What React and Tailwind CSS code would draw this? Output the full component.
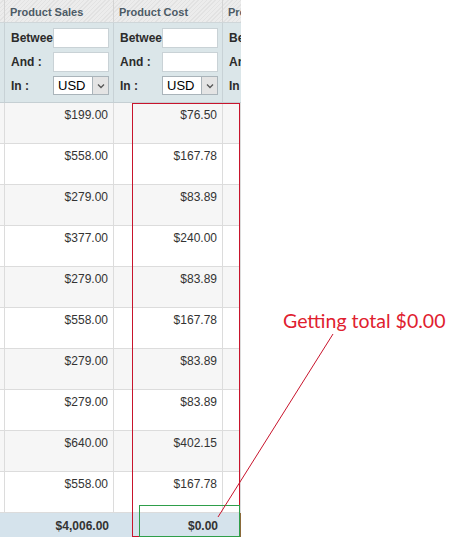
import React from "react";

const rows = [
  ["$199.00", "$76.50"],
  ["$558.00", "$167.78"],
  ["$279.00", "$83.89"],
  ["$377.00", "$240.00"],
  ["$279.00", "$83.89"],
  ["$558.00", "$167.78"],
  ["$279.00", "$83.89"],
  ["$279.00", "$83.89"],
  ["$640.00", "$402.15"],
  ["$558.00", "$167.78"],
];

const grid = "grid grid-cols-[5px_109px_109px_18px]";
const font = { fontFamily: '"Liberation Sans", Arial, sans-serif' };

function Filter({ cut }) {
  return (
    <div className="flex flex-col gap-[4px] pl-[6px] pt-[5px] text-[12px] font-bold text-[#2b2b2b]">
      <div className="flex h-[20px] items-center">
        <span className="w-[42px] overflow-hidden whitespace-nowrap">Betwee</span>
        {!cut && <div className="h-[20px] w-[56px] border border-[#c9d2d6] bg-white" />}
      </div>
      <div className="flex h-[20px] items-center">
        <span className="w-[42px] whitespace-nowrap">And :</span>
        {!cut && <div className="h-[20px] w-[56px] border border-[#c9d2d6] bg-white" />}
      </div>
      <div className="flex h-[19px] items-center">
        <span className="w-[42px] whitespace-nowrap">In :</span>
        {!cut && (
          <div className="flex h-[19px] w-[56px] border border-[#aab4ba] bg-white">
            <span className="flex-1 pl-[4px] text-[13px] font-normal leading-[17px] text-black">USD</span>
            <span className="flex w-[16px] items-center justify-center border-l border-[#aab4ba] bg-[#e4e4e4]">
              <svg width="8" height="6" viewBox="0 0 8 6"><path d="M1 1.5 L4 4.5 L7 1.5" stroke="#555" strokeWidth="1.3" fill="none" /></svg>
            </span>
          </div>
        )}
      </div>
    </div>
  );
}

export default function App() {
  return (
    <div className="relative h-[540px] w-[473px] overflow-hidden bg-white" style={font}>
      <div className="w-[241px] overflow-hidden">
        {/* header */}
        <div className={`${grid} h-[23px] border-b border-[#cfd6d9] bg-[repeating-linear-gradient(135deg,#ececec_0px,#ececec_2px,#e2e2e2_2px,#e2e2e2_3px)] text-[11px] font-bold text-[#4d5b66]`}>
          <div className="border-r border-[#d4d4d4]" />
          <div className="border-r border-[#d4d4d4] pl-[5px] pt-[4px] whitespace-nowrap">Product Sales</div>
          <div className="border-r border-[#d4d4d4] pl-[5px] pt-[4px] whitespace-nowrap">Product Cost</div>
          <div className="overflow-hidden pl-[5px] pt-[4px] whitespace-nowrap">Product</div>
        </div>
        {/* filters */}
        <div className={`${grid} h-[80px] border-b border-[#c5cfd3] bg-[#dbe6e9]`}>
          <div className="border-r border-[#c8d2d6]" />
          <div className="border-r border-[#c8d2d6]"><Filter /></div>
          <div className="border-r border-[#c8d2d6]"><Filter /></div>
          <div className="overflow-hidden"><Filter cut /></div>
        </div>
        {/* rows */}
        {rows.map((r, i) => (
          <div
            key={i}
            className={`${grid} h-[41px] border-b border-[#dcdcdc] text-[12px] text-[#333] ${i % 2 === 0 ? "bg-[#f6f6f6]" : "bg-white"}`}
          >
            <div className="border-r border-[#dcdcdc]" />
            <div className="border-r border-[#dcdcdc] pr-[5px] pt-[3px] text-right">{r[0]}</div>
            <div className="border-r border-[#dcdcdc] pr-[5px] pt-[3px] text-right">{r[1]}</div>
            <div className="border-r border-[#dcdcdc]" />
          </div>
        ))}
        {/* footer */}
        <div className={`${grid} h-[24px] bg-[#d5e3ec] text-[12px] font-bold text-[#333]`}>
          <div />
          <div className="pr-[5px] pt-[4px] text-right">$4,006.00</div>
          <div className="pr-[5px] pt-[4px] text-right">$0.00</div>
          <div className="border-r border-[#8a6a3a]" />
        </div>
      </div>

      {/* annotation overlays */}
      <div className="absolute left-[132px] top-[103px] h-[434px] w-[108px] border border-[#c8142c]" />
      <div className="absolute left-[139px] top-[505px] h-[32px] w-[101px] border border-[#2e9e4a]" />
      <svg className="absolute left-0 top-0" width="473" height="540">
        <line x1="333" y1="334" x2="218" y2="517" stroke="#c8142c" strokeWidth="1" />
      </svg>
      <div
        className="absolute left-[283px] top-[306px] whitespace-nowrap text-[19.5px] text-[#e0202e]"
        style={{ fontFamily: 'Lato, "Open Sans", sans-serif' }}
      >
        Getting total $0.00
      </div>
    </div>
  );
}
